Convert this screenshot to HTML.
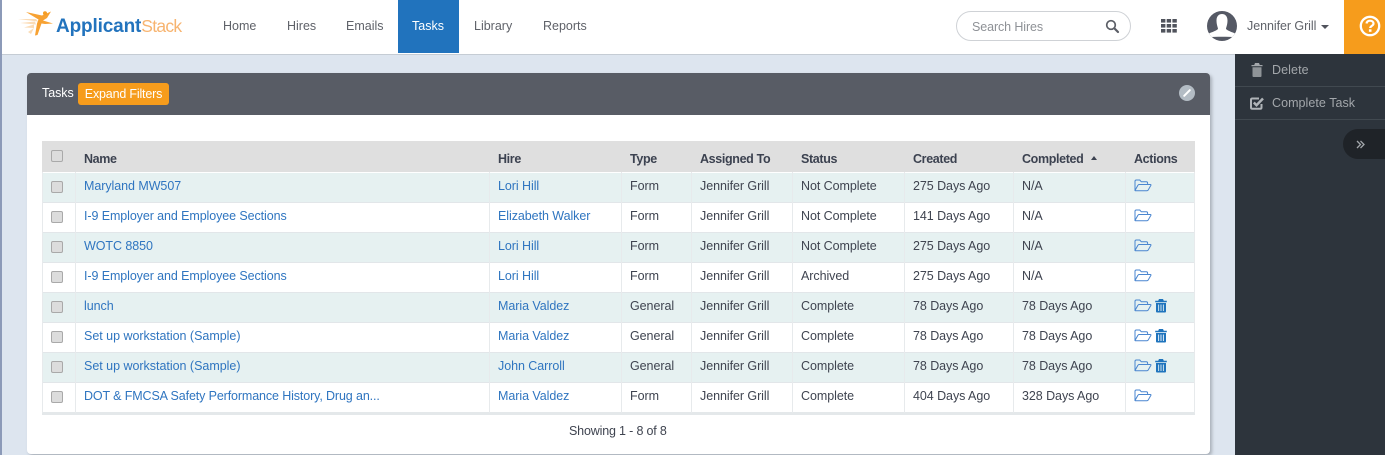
<!DOCTYPE html>
<html>
<head>
<meta charset="utf-8">
<style>
html,body{margin:0;padding:0;width:1385px;height:455px;overflow:hidden;background:#dde5ef;font-family:"Liberation Sans",sans-serif;font-size:13px;color:#3f4450}
.a{position:absolute;white-space:nowrap}
#top{position:absolute;left:0;top:0;width:1385px;height:54px;background:#fff;border-bottom:1px solid #c5ccd4}
#leftline{position:absolute;left:0;top:0;width:2px;height:455px;background:#8c9ab8}
.nav{position:absolute;top:19px;color:#5f6269;font-size:12.5px;line-height:15px}
#side{position:absolute;left:1235px;top:54px;width:150px;height:401px;background:#2d343c}
.sep{position:absolute;left:1235px;width:150px;height:1px;background:#414950}
#panel{position:absolute;left:27px;top:73px;width:1183px;height:381px;background:#fff;border-radius:4px;box-shadow:2px 2px 3px #a8afb8}
#phead{position:absolute;left:27px;top:73px;width:1183px;height:42px;background:#585c65;border-radius:4px 4px 0 0}
.row{position:absolute;left:42px;width:1153px;height:29px;border-bottom:1px solid #e2e6e9;background:#fff}
.row.o{background:#e6f1f1}
.c{position:absolute;top:172px;height:241px;width:1px;background:#e7eaec}
.t{position:absolute;white-space:nowrap;font-size:12.5px;line-height:15px;letter-spacing:-.06px;color:#3f4450}
.l{color:#2f75c0}
.h{position:absolute;white-space:nowrap;top:152px;font-size:12.5px;line-height:15px;font-weight:bold;color:#3c4250;letter-spacing:-.35px}
.cb{position:absolute;left:51px;width:10px;height:10px;border:1px solid #a9a9a9;border-radius:2px;background:#dcdcdc}
svg{position:absolute;display:block}
</style>
</head>
<body>
<div id="top"></div>
<div id="leftline"></div>

<svg style="left:17px;top:10px" width="38" height="27" viewBox="0 0 38 27">
<path d="M1 9 L19 9 L21 11.500 Z M3 13 L18 11.500 L19 14.500 Z M7 17.500 L17 14.500 L17 18 Z M11 22 L17 18 L14 24 Z" fill="#fbdcb6"/>
<path d="M9 2 L25 5.500 L34 1.500 L30 8 L26 10.500 L36 13.500 L28 14 L24.500 13.500 L20.500 25 L18 25.500 L20 13.500 L21.500 9.500 Z" fill="#f7a233"/>
<circle cx="28" cy="3.200" r="2" fill="#f59d24"/>
</svg>
<div class="a" style="left:56px;top:15px;font-size:19px;line-height:23px;font-weight:bold;color:#2273bd;letter-spacing:-.15px">Applicant<span style="font-weight:normal;font-size:17.5px;color:#f7b470;letter-spacing:-.7px">Stack</span></div>

<div class="nav" style="left:223px">Home</div>
<div class="nav" style="left:287px">Hires</div>
<div class="nav" style="left:346px">Emails</div>
<div class="a" style="left:398px;top:0;width:61px;height:53px;background:#2173bd"></div>
<div class="nav" style="left:412px;color:#fff">Tasks</div>
<div class="nav" style="left:474px">Library</div>
<div class="nav" style="left:543px">Reports</div>

<div class="a" style="left:956px;top:11px;width:173px;height:28px;border:1px solid #cfd2d6;border-radius:15px;background:#fff"></div>
<div class="a" style="left:972px;top:20px;font-size:12.5px;line-height:15px;color:#8e9196;letter-spacing:-.1px">Search Hires</div>
<svg style="left:1105px;top:19px" width="15" height="15" viewBox="0 0 15 15"><circle cx="6" cy="6" r="4.300" fill="none" stroke="#5b5e66" stroke-width="1.700"/><path d="M9.400 9.400 L13 13" stroke="#5b5e66" stroke-width="2.200" stroke-linecap="round"/></svg>

<svg style="left:1161px;top:19px" width="16" height="14" viewBox="0 0 16 14" fill="#50535c">
<rect x="0" y="0" width="4.400" height="3.600"/><rect x="5.700" y="0" width="4.400" height="3.600"/><rect x="11.400" y="0" width="4.400" height="3.600"/>
<rect x="0" y="5" width="4.400" height="3.600"/><rect x="5.700" y="5" width="4.400" height="3.600"/><rect x="11.400" y="5" width="4.400" height="3.600"/>
<rect x="0" y="10" width="4.400" height="3.600"/><rect x="5.700" y="10" width="4.400" height="3.600"/><rect x="11.400" y="10" width="4.400" height="3.600"/>
</svg>

<svg style="left:1207px;top:11px" width="30" height="30" viewBox="0 0 30 30">
<defs><clipPath id="av"><circle cx="15" cy="15" r="15"/></clipPath></defs>
<circle cx="15" cy="15" r="15" fill="#555965"/>
<g clip-path="url(#av)"><path d="M0 26.500 C5 25.800 10 25.800 15 25.800 C20 25.800 25 25.800 30 26.500 L30 23.500 C27 21.500 21.500 20.500 19 18 C19 16.500 20.500 14 20.500 9.500 C20.500 5 18 3 15 3 C12 3 9.500 5 9.500 9.500 C9.500 14 11 16.500 11 18 C8.500 20.500 3 21.500 0 23.500 Z" fill="#fff"/></g>
</svg>
<div class="a" style="left:1247px;top:19px;font-size:12.5px;line-height:15px;color:#5f6269;letter-spacing:-.06px">Jennifer Grill</div>
<svg style="left:1321px;top:25px" width="8" height="4" viewBox="0 0 8 4"><path d="M0 0 H8 L4 4 Z" fill="#50535c"/></svg>

<div class="a" style="left:1344px;top:0;width:41px;height:54px;background:#f69c1c"></div>
<svg style="left:1359px;top:15px" width="22" height="22" viewBox="0 0 22 22">
<circle cx="11" cy="11" r="9.200" fill="none" stroke="#fff" stroke-width="2.300"/>
<path d="M7.600 8.500 C7.800 6.500 9.200 5.700 11 5.700 C13 5.700 14.500 6.900 14.500 8.600 C14.500 10.800 11.200 10.900 11.200 13" fill="none" stroke="#fff" stroke-width="2.200"/>
<rect x="9.900" y="14.300" width="2.600" height="2.500" fill="#fff"/>
</svg>

<div id="side"></div>
<div class="sep" style="top:86px"></div>
<div class="sep" style="top:119px"></div>
<svg style="left:1251px;top:63px" width="12" height="14" viewBox="0 0 12 14" fill="#a3a7ab"><path d="M4 0 H8 L8.800 2 H11.500 V3.300 H.5 V2 H3.200 Z"/><path d="M1.500 4.300 H10.500 V13 Q10.500 14 9.500 14 H2.500 Q1.500 14 1.500 13 Z" fill="#8f9498"/></svg>
<div class="a" style="left:1272px;top:63px;font-size:12.5px;line-height:15px;color:#a3a7ab;letter-spacing:.1px">Delete</div>
<svg style="left:1250px;top:96px" width="15" height="14" viewBox="0 0 15 14"><path d="M11.500 8 V11.500 Q11.500 12.800 10.200 12.800 H2.300 Q1 12.800 1 11.500 V3.800 Q1 2.500 2.300 2.500 H9" fill="none" stroke="#b0b4b8" stroke-width="2"/><path d="M3.800 6.500 L6.500 9.200 L13 2.500" fill="none" stroke="#b0b4b8" stroke-width="2.500"/></svg>
<div class="a" style="left:1272px;top:96px;font-size:12.5px;line-height:15px;color:#a3a7ab;letter-spacing:.05px">Complete Task</div>
<div class="a" style="left:1343px;top:129px;width:42px;height:30px;background:#1f2328;border-radius:15px 0 0 15px"></div>
<svg style="left:1356px;top:140px" width="9" height="9" viewBox="0 0 9 9"><path d="M1 1 L4.500 4.500 L1 8 M4.500 1 L8 4.500 L4.500 8" fill="none" stroke="#a3a7ab" stroke-width="1.300"/></svg>

<div id="panel"></div>
<div id="phead"></div>
<div class="a" style="left:42px;top:86px;font-size:12.5px;line-height:15px;color:#fff;letter-spacing:-.05px">Tasks</div>
<div class="a" style="left:78px;top:83px;width:91px;height:22px;background:#f69c1c;border-radius:3px;color:#fff;font-size:12.5px;line-height:22px;text-align:center;letter-spacing:-.18px">Expand Filters</div>
<div class="a" style="left:1179px;top:85px;width:16px;height:16px;border-radius:8px;background:#b3bcc4"></div>
<svg style="left:1182px;top:88px" width="10" height="10" viewBox="0 0 10 10"><path d="M2.200 7.800 L7.800 2.200" stroke="#fff" stroke-width="2" stroke-linecap="round"/></svg>

<div class="a" style="left:42px;top:141px;width:1153px;height:31px;background:#dfdfdf"></div>
<div class="row o" style="top:173px"></div>
<div class="row" style="top:203px"></div>
<div class="row o" style="top:233px"></div>
<div class="row" style="top:263px"></div>
<div class="row o" style="top:293px"></div>
<div class="row" style="top:323px"></div>
<div class="row o" style="top:353px"></div>
<div class="row" style="top:383px"></div>
<div class="a" style="left:42px;top:412px;width:1153px;height:3px;background:#e4e8ea"></div>
<div class="c" style="left:42px"></div>
<div class="c" style="left:75px"></div>
<div class="c" style="left:489px"></div>
<div class="c" style="left:621px"></div>
<div class="c" style="left:691px"></div>
<div class="c" style="left:792px"></div>
<div class="c" style="left:904px"></div>
<div class="c" style="left:1013px"></div>
<div class="c" style="left:1125px"></div>
<div class="c" style="left:1194px"></div>

<div class="cb" style="top:150px"></div>
<div class="h" style="left:84px">Name</div>
<div class="h" style="left:498px">Hire</div>
<div class="h" style="left:630px">Type</div>
<div class="h" style="left:700px">Assigned To</div>
<div class="h" style="left:801px">Status</div>
<div class="h" style="left:913px">Created</div>
<div class="h" style="left:1022px">Completed</div>
<svg style="left:1091px;top:156px" width="6" height="4" viewBox="0 0 6 4"><path d="M0 4 L3 0 L6 4 Z" fill="#3c4250"/></svg>
<div class="h" style="left:1134px">Actions</div>

<!-- row 1 -->
<div class="cb" style="top:181px"></div>
<div class="t l" style="left:84px;top:179px">Maryland MW507</div>
<div class="t l" style="left:498px;top:179px">Lori Hill</div>
<div class="t" style="left:630px;top:179px">Form</div>
<div class="t" style="left:700px;top:179px">Jennifer Grill</div>
<div class="t" style="left:801px;top:179px">Not Complete</div>
<div class="t" style="left:913px;top:179px">275 Days Ago</div>
<div class="t" style="left:1022px;top:179px">N/A</div>
<!-- row 2 -->
<div class="cb" style="top:211px"></div>
<div class="t l" style="left:84px;top:209px;letter-spacing:-.09px">I-9 Employer and Employee Sections</div>
<div class="t l" style="left:498px;top:209px">Elizabeth Walker</div>
<div class="t" style="left:630px;top:209px">Form</div>
<div class="t" style="left:700px;top:209px">Jennifer Grill</div>
<div class="t" style="left:801px;top:209px">Not Complete</div>
<div class="t" style="left:913px;top:209px">141 Days Ago</div>
<div class="t" style="left:1022px;top:209px">N/A</div>
<!-- row 3 -->
<div class="cb" style="top:241px"></div>
<div class="t l" style="left:84px;top:239px">WOTC 8850</div>
<div class="t l" style="left:498px;top:239px">Lori Hill</div>
<div class="t" style="left:630px;top:239px">Form</div>
<div class="t" style="left:700px;top:239px">Jennifer Grill</div>
<div class="t" style="left:801px;top:239px">Not Complete</div>
<div class="t" style="left:913px;top:239px">275 Days Ago</div>
<div class="t" style="left:1022px;top:239px">N/A</div>
<!-- row 4 -->
<div class="cb" style="top:271px"></div>
<div class="t l" style="left:84px;top:269px;letter-spacing:-.09px">I-9 Employer and Employee Sections</div>
<div class="t l" style="left:498px;top:269px">Lori Hill</div>
<div class="t" style="left:630px;top:269px">Form</div>
<div class="t" style="left:700px;top:269px">Jennifer Grill</div>
<div class="t" style="left:801px;top:269px">Archived</div>
<div class="t" style="left:913px;top:269px">275 Days Ago</div>
<div class="t" style="left:1022px;top:269px">N/A</div>
<!-- row 5 -->
<div class="cb" style="top:301px"></div>
<div class="t l" style="left:84px;top:299px">lunch</div>
<div class="t l" style="left:498px;top:299px">Maria Valdez</div>
<div class="t" style="left:630px;top:299px">General</div>
<div class="t" style="left:700px;top:299px">Jennifer Grill</div>
<div class="t" style="left:801px;top:299px">Complete</div>
<div class="t" style="left:913px;top:299px">78 Days Ago</div>
<div class="t" style="left:1022px;top:299px">78 Days Ago</div>
<!-- row 6 -->
<div class="cb" style="top:331px"></div>
<div class="t l" style="left:84px;top:329px;letter-spacing:-.02px">Set up workstation (Sample)</div>
<div class="t l" style="left:498px;top:329px">Maria Valdez</div>
<div class="t" style="left:630px;top:329px">General</div>
<div class="t" style="left:700px;top:329px">Jennifer Grill</div>
<div class="t" style="left:801px;top:329px">Complete</div>
<div class="t" style="left:913px;top:329px">78 Days Ago</div>
<div class="t" style="left:1022px;top:329px">78 Days Ago</div>
<!-- row 7 -->
<div class="cb" style="top:361px"></div>
<div class="t l" style="left:84px;top:359px;letter-spacing:-.02px">Set up workstation (Sample)</div>
<div class="t l" style="left:498px;top:359px">John Carroll</div>
<div class="t" style="left:630px;top:359px">General</div>
<div class="t" style="left:700px;top:359px">Jennifer Grill</div>
<div class="t" style="left:801px;top:359px">Complete</div>
<div class="t" style="left:913px;top:359px">78 Days Ago</div>
<div class="t" style="left:1022px;top:359px">78 Days Ago</div>
<!-- row 8 -->
<div class="cb" style="top:391px"></div>
<div class="t l" style="left:84px;top:389px;letter-spacing:-.12px">DOT &amp; FMCSA Safety Performance History, Drug an...</div>
<div class="t l" style="left:498px;top:389px">Maria Valdez</div>
<div class="t" style="left:630px;top:389px">Form</div>
<div class="t" style="left:700px;top:389px">Jennifer Grill</div>
<div class="t" style="left:801px;top:389px">Complete</div>
<div class="t" style="left:913px;top:389px">404 Days Ago</div>
<div class="t" style="left:1022px;top:389px">328 Days Ago</div>

<!-- folder icons -->
<svg width="0" height="0" style="position:absolute"><defs>
<g id="fo"><path d="M1 11.500 V2.300 Q1 1 2.300 1 H5.800 L7.300 2.800 H12.300 Q13.600 2.800 13.600 4.100 V5.500 M1 11.500 L3.900 6.300 Q4.300 5.500 5.200 5.500 H16.200 Q17.400 5.500 16.800 6.500 L14.200 11 Q13.800 11.700 12.900 11.700 H1.300 Z" fill="none" stroke="#4a86d0" stroke-width="1"/></g>
<g id="tr"><path d="M4 0 H8 L8.800 1.800 H11.800 V3.200 H.2 V1.800 H3.200 Z" fill="#1f74bd"/><path d="M1 4 H11 V12.500 Q11 13.500 10 13.500 H2 Q1 13.500 1 12.500 Z M3.200 5.500 V12 H4.100 V5.500 Z M5.550 5.500 V12 H6.450 V5.500 Z M7.900 5.500 V12 H8.800 V5.500 Z" fill="#1f74bd" fill-rule="evenodd"/></g>
</defs></svg>
<svg style="left:1134px;top:179px" width="18" height="13"><use href="#fo"/></svg>
<svg style="left:1134px;top:209px" width="18" height="13"><use href="#fo"/></svg>
<svg style="left:1134px;top:239px" width="18" height="13"><use href="#fo"/></svg>
<svg style="left:1134px;top:269px" width="18" height="13"><use href="#fo"/></svg>
<svg style="left:1134px;top:299px" width="18" height="13"><use href="#fo"/></svg>
<svg style="left:1134px;top:329px" width="18" height="13"><use href="#fo"/></svg>
<svg style="left:1134px;top:359px" width="18" height="13"><use href="#fo"/></svg>
<svg style="left:1134px;top:389px" width="18" height="13"><use href="#fo"/></svg>
<svg style="left:1155px;top:299px" width="12" height="14"><use href="#tr"/></svg>
<svg style="left:1155px;top:329px" width="12" height="14"><use href="#tr"/></svg>
<svg style="left:1155px;top:359px" width="12" height="14"><use href="#tr"/></svg>

<div class="a" style="left:569px;top:424px;font-size:12.5px;line-height:15px;color:#3f4450;letter-spacing:-.17px">Showing 1 - 8 of 8</div>
</body>
</html>
